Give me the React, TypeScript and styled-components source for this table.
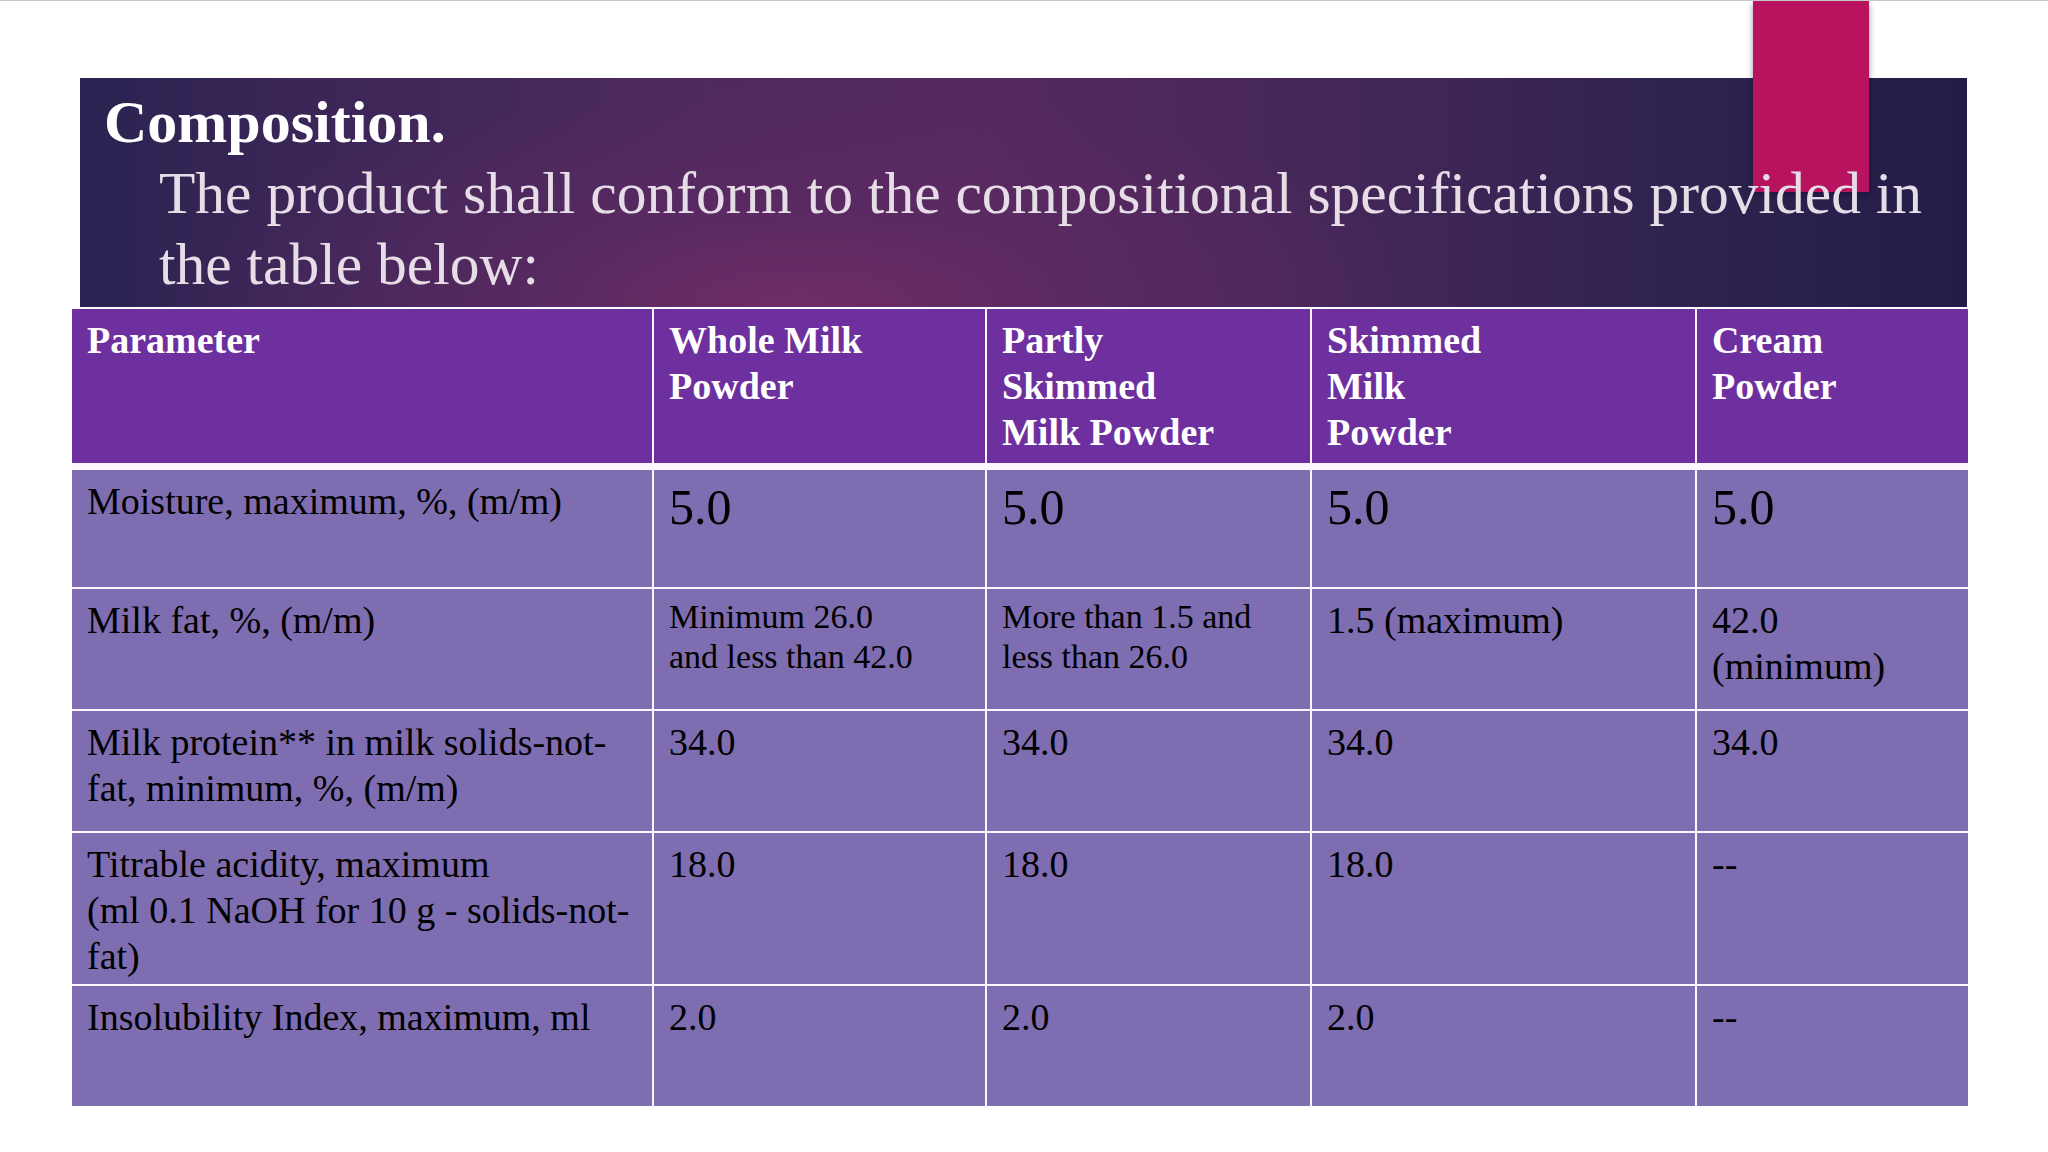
import React from 'react'
import styled, { createGlobalStyle } from 'styled-components'

const GlobalStyle = createGlobalStyle`
  html, body {
    margin: 0;
    padding: 0;
    background: #ffffff;
  }
  body {
    font-family: "Liberation Serif", "Times New Roman", serif;
  }
`

const Slide = styled.div`
  position: relative;
  width: 2048px;
  height: 1152px;
  box-sizing: border-box;
  padding-top: 77px;
  border-top: 1px solid #c6c6c6;
  background: #ffffff;
  overflow: hidden;
`

const Accent = styled.div`
  position: absolute;
  left: 1753px;
  top: 0;
  width: 116px;
  height: 191px;
  background: #b7135f;
  box-shadow: 0 3px 6px rgba(20, 10, 40, 0.45);
  z-index: 1;
`

const Banner = styled.div`
  position: relative;
  width: 1887px;
  height: 229px;
  margin-left: 80px;
  box-sizing: border-box;
  padding: 9px 24px 0 24px;
  background:
    radial-gradient(ellipse 34% 95% at 38% 100%, rgba(112, 44, 104, 0.95) 0%, rgba(96, 42, 100, 0.6) 45%, rgba(80, 40, 94, 0) 100%),
    linear-gradient(90deg, #2a2351 0%, #3b2657 12%, #4f2a5e 33%, #55295f 48%, #452759 66%, #302350 84%, #221d47 100%);
`

const Title = styled.div`
  position: relative;
  z-index: 2;
  color: #ffffff;
  font-size: 60px;
  font-weight: 700;
  line-height: 71px;
`

const Lead = styled.div`
  position: relative;
  z-index: 2;
  padding-left: 55px;
  color: #e6dde7;
  font-size: 59.5px;
  line-height: 71px;
  white-space: nowrap;
`

const Table = styled.div`
  display: grid;
  grid-template-columns: 580px 331px 323px 383px 271px;
  grid-template-rows: 159px 117px 120px 120px 151px 120px;
  gap: 2px;
  width: 1896px;
  margin: 2px 0 0 72px;
  background: #fbf6ff;
`

const HeadCell = styled.div`
  margin-bottom: 5px;
  padding: 8px 14px 0 15px;
  background: #6e2f9f;
  color: #ffffff;
  font-size: 38px;
  font-weight: 700;
  line-height: 46px;
  white-space: nowrap;
`

type Size = 'big' | 'normal' | 'small'

const sizes: Record<Size, { font: number; line: number }> = {
  big: { font: 50, line: 58 },
  normal: { font: 38, line: 46 },
  small: { font: 34, line: 40 },
}

const Cell = styled.div<{ $size: Size }>`
  padding: 8px 14px 0 15px;
  background: #7e6db0;
  color: #000000;
  font-size: ${(p) => sizes[p.$size].font}px;
  line-height: ${(p) => sizes[p.$size].line}px;
  white-space: nowrap;
`

const Line = styled.span`
  display: block;
`

interface CellData {
  lines: string[]
  size?: Size
}

const heads: string[][] = [
  ['Parameter'],
  ['Whole Milk', 'Powder'],
  ['Partly', 'Skimmed', 'Milk Powder'],
  ['Skimmed', 'Milk', 'Powder'],
  ['Cream', 'Powder'],
]

const c = (text: string | string[], size: Size = 'normal'): CellData => ({
  lines: Array.isArray(text) ? text : [text],
  size,
})

const rows: CellData[][] = [
  [c('Moisture, maximum, %, (m/m)'), c('5.0', 'big'), c('5.0', 'big'), c('5.0', 'big'), c('5.0', 'big')],
  [
    c('Milk fat, %, (m/m)'),
    c(['Minimum 26.0', 'and less than 42.0'], 'small'),
    c(['More than 1.5 and', 'less than 26.0'], 'small'),
    c('1.5 (maximum)'),
    c(['42.0', '(minimum)']),
  ],
  [c(['Milk protein** in milk solids-not-', 'fat, minimum, %, (m/m)']), c('34.0'), c('34.0'), c('34.0'), c('34.0')],
  [
    c(['Titrable acidity, maximum', '(ml 0.1 NaOH for 10 g - solids-not-', 'fat)']),
    c('18.0'),
    c('18.0'),
    c('18.0'),
    c('--'),
  ],
  [c('Insolubility Index, maximum, ml'), c('2.0'), c('2.0'), c('2.0'), c('--')],
]

const App: React.FC = () => {
  return (
    <>
      <GlobalStyle />
      <Slide>
        <Accent />
        <Banner>
          <Title>Composition.</Title>
          <Lead>
            <Line>The product shall conform to the compositional specifications provided in</Line>
            <Line>the table below:</Line>
          </Lead>
        </Banner>
        <Table>
          {heads.map((lines, i) => (
            <HeadCell key={'h' + i}>
              {lines.map((l, j) => (
                <Line key={j}>{l}</Line>
              ))}
            </HeadCell>
          ))}
          {rows.map((row, r) =>
            row.map((cell, i) => (
              <Cell key={r + '-' + i} $size={cell.size || 'normal'}>
                {cell.lines.map((l, j) => (
                  <Line key={j}>{l}</Line>
                ))}
              </Cell>
            ))
          )}
        </Table>
      </Slide>
    </>
  )
}

export default App
